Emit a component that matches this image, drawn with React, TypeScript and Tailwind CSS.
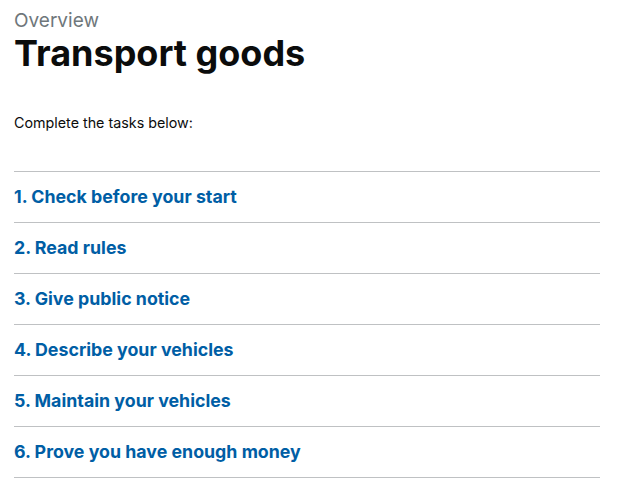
import React from "react";

const tasks = [
  "1. Check before your start",
  "2. Read rules",
  "3. Give public notice",
  "4. Describe your vehicles",
  "5. Maintain your vehicles",
  "6. Prove you have enough money",
];

export default function App() {
  return (
    <div className="w-[620px] h-[492px] bg-white px-[14px] pt-[9px] font-['Inter',sans-serif] text-[#0b0c0c]">
      <div className="text-[19px] leading-[24px] text-[#6f777b]">Overview</div>
      <h1 className="text-[36px] leading-[40px] font-bold">Transport goods</h1>

      <p className="mt-[40px] text-[14.3px] leading-[20px]">Complete the tasks below:</p>

      <ul className="mt-[38px] w-[586px] border-t border-[#bfc1c3]">
        {tasks.map((task) => (
          <li key={task} className="border-b border-[#bfc1c3] h-[51px] flex items-center">
            <a href="#" className="text-[17.8px] font-bold text-[#005ea5]">
              {task}
            </a>
          </li>
        ))}
      </ul>
    </div>
  );
}
